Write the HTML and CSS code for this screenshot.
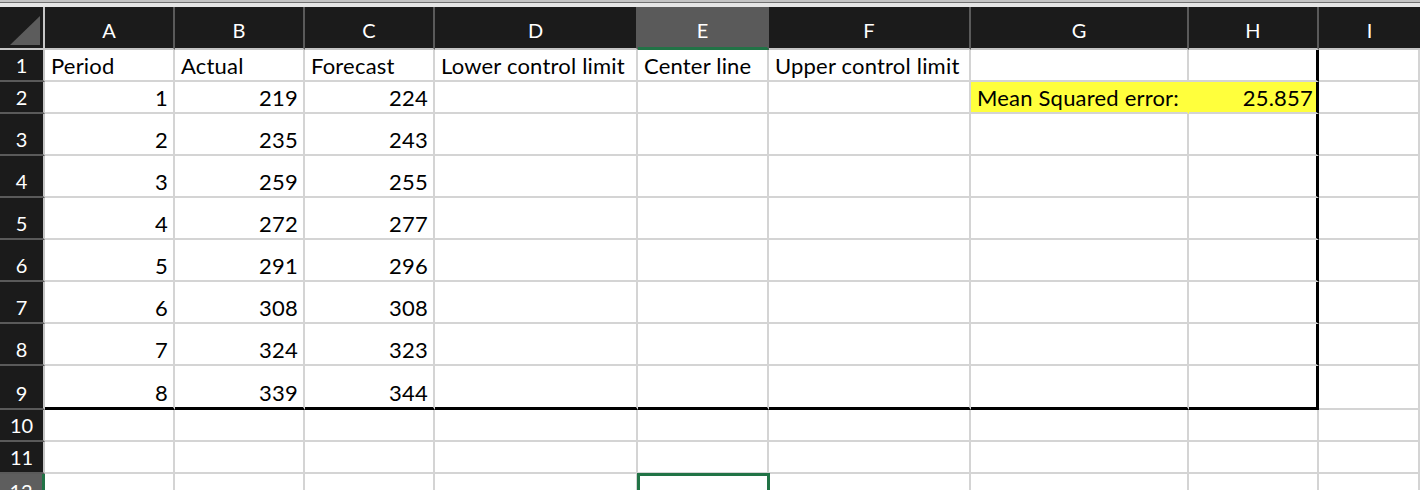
FILE: index.html
```html
<!DOCTYPE html>
<html>
<head>
<meta charset="utf-8">
<link rel="stylesheet" href="styles.css">
</head>
<body>
<div class="topbar"></div>
<div class="sheet">
  <div class="row hdr">
    <div class="corner"><span class="tri"></span></div>
    <div class="ch">A</div><div class="ch">B</div><div class="ch">C</div><div class="ch">D</div>
    <div class="ch sel">E</div><div class="ch">F</div><div class="ch">G</div><div class="ch">H</div><div class="ch last">I</div>
  </div>

  <div class="row short">
    <div class="rh">1</div>
    <div class="c">Period</div><div class="c">Actual</div><div class="c">Forecast</div><div class="c">Lower control limit</div>
    <div class="c">Center line</div><div class="c">Upper control limit</div><div class="c"></div><div class="c bR"></div><div class="c"></div>
  </div>
  <div class="row short">
    <div class="rh">2</div>
    <div class="c n">1</div><div class="c n">219</div><div class="c n">224</div><div class="c"></div>
    <div class="c"></div><div class="c"></div><div class="c yel yelL">Mean Squared error:</div><div class="c n yel bR">25.857</div><div class="c"></div>
  </div>
  <div class="row tall">
    <div class="rh">3</div>
    <div class="c n">2</div><div class="c n">235</div><div class="c n">243</div><div class="c"></div>
    <div class="c"></div><div class="c"></div><div class="c"></div><div class="c bR"></div><div class="c"></div>
  </div>
  <div class="row tall">
    <div class="rh">4</div>
    <div class="c n">3</div><div class="c n">259</div><div class="c n">255</div><div class="c"></div>
    <div class="c"></div><div class="c"></div><div class="c"></div><div class="c bR"></div><div class="c"></div>
  </div>
  <div class="row tall">
    <div class="rh">5</div>
    <div class="c n">4</div><div class="c n">272</div><div class="c n">277</div><div class="c"></div>
    <div class="c"></div><div class="c"></div><div class="c"></div><div class="c bR"></div><div class="c"></div>
  </div>
  <div class="row tall">
    <div class="rh">6</div>
    <div class="c n">5</div><div class="c n">291</div><div class="c n">296</div><div class="c"></div>
    <div class="c"></div><div class="c"></div><div class="c"></div><div class="c bR"></div><div class="c"></div>
  </div>
  <div class="row tall">
    <div class="rh">7</div>
    <div class="c n">6</div><div class="c n">308</div><div class="c n">308</div><div class="c"></div>
    <div class="c"></div><div class="c"></div><div class="c"></div><div class="c bR"></div><div class="c"></div>
  </div>
  <div class="row tall">
    <div class="rh">8</div>
    <div class="c n">7</div><div class="c n">324</div><div class="c n">323</div><div class="c"></div>
    <div class="c"></div><div class="c"></div><div class="c"></div><div class="c bR"></div><div class="c"></div>
  </div>
  <div class="row tall last9">
    <div class="rh">9</div>
    <div class="c n bB">8</div><div class="c n bB">339</div><div class="c n bB">344</div><div class="c bB"></div>
    <div class="c bB"></div><div class="c bB"></div><div class="c bB"></div><div class="c bB bR"></div><div class="c"></div>
  </div>
  <div class="row short">
    <div class="rh">10</div>
    <div class="c"></div><div class="c"></div><div class="c"></div><div class="c"></div>
    <div class="c"></div><div class="c"></div><div class="c"></div><div class="c"></div><div class="c"></div>
  </div>
  <div class="row short">
    <div class="rh">11</div>
    <div class="c"></div><div class="c"></div><div class="c"></div><div class="c"></div>
    <div class="c"></div><div class="c"></div><div class="c"></div><div class="c"></div><div class="c"></div>
  </div>
  <div class="row short">
    <div class="rh rsel">12</div>
    <div class="c"></div><div class="c"></div><div class="c"></div><div class="c"></div>
    <div class="c active"></div><div class="c"></div><div class="c"></div><div class="c"></div><div class="c"></div>
  </div>
</div>
</body>
</html>
```

FILE: styles.css
```css
* { box-sizing: border-box; }
html, body { margin: 0; padding: 0; background: #ffffff; overflow: hidden; }
body { width: 1420px; height: 490px; font-family: Lato, "Open Sans", sans-serif; }

.topbar {
  height: 7px;
  background: #e6e6e6;
  border-top: 2px solid #c4c4c4;
  box-shadow: inset 0 1px 0 #707070;
}

.sheet { display: flex; flex-direction: column; }

.row {
  display: grid;
  grid-template-columns: 45px 130px 130px 130px 203px 131px 202px 218px 130px 1fr;
}
.hdr { height: 43px; }
.short { height: 32px; }
.tall { height: 42px; }
.last9 { height: 44px; }

.corner {
  background: #1b1b1b;
  border-right: 2px solid #c6c6c6;
  border-bottom: 2px solid #c6c6c6;
  position: relative;
}
.tri {
  position: absolute;
  left: 10px;
  top: 9px;
  width: 0; height: 0;
  border-left: 30px solid transparent;
  border-bottom: 29px solid #5c5c5c;
}

.ch {
  background: #1b1b1b;
  color: #ffffff;
  font-size: 20px;
  display: flex;
  align-items: center;
  justify-content: center;
  padding-top: 5px;
  border-right: 2px solid #5a5a5a;
  border-bottom: 2px solid #c6c6c6;
}
.ch.last { border-right: none; }
.ch.sel { background: #5a5a5a; border-bottom: 3px solid #217346; }

.rh {
  background: #1b1b1b;
  color: #ffffff;
  font-size: 20px;
  display: flex;
  align-items: flex-end;
  justify-content: center;
  padding-bottom: 3px;
  border-right: 2px solid #c6c6c6;
  border-bottom: 2px solid #5a5a5a;
}
.rh.rsel { background: #5e5e5e; border-right: 3px solid #217346; border-bottom: none; }

.c {
  display: flex;
  align-items: flex-end;
  padding: 0 5px 2px 6px;
  font-size: 22px;
  letter-spacing: 0.2px;
  line-height: 25px;
  color: #000000;
  white-space: nowrap;
  border-right: 2px solid #d4d4d4;
  border-bottom: 2px solid #d4d4d4;
}
.c.n { justify-content: flex-end; padding-right: 5px; }
.c.yel { background: #ffff3c; }
.c.yelL { border-right-color: #ffff3c; }
.c.bR { border-right: 3px solid #000000; padding-right: 3px; }
.c.bB { border-bottom: 3px solid #000000; }
.c.active {
  position: relative;
  z-index: 2;
  outline: 3px solid #217346;
  outline-offset: -2px;
}
```
